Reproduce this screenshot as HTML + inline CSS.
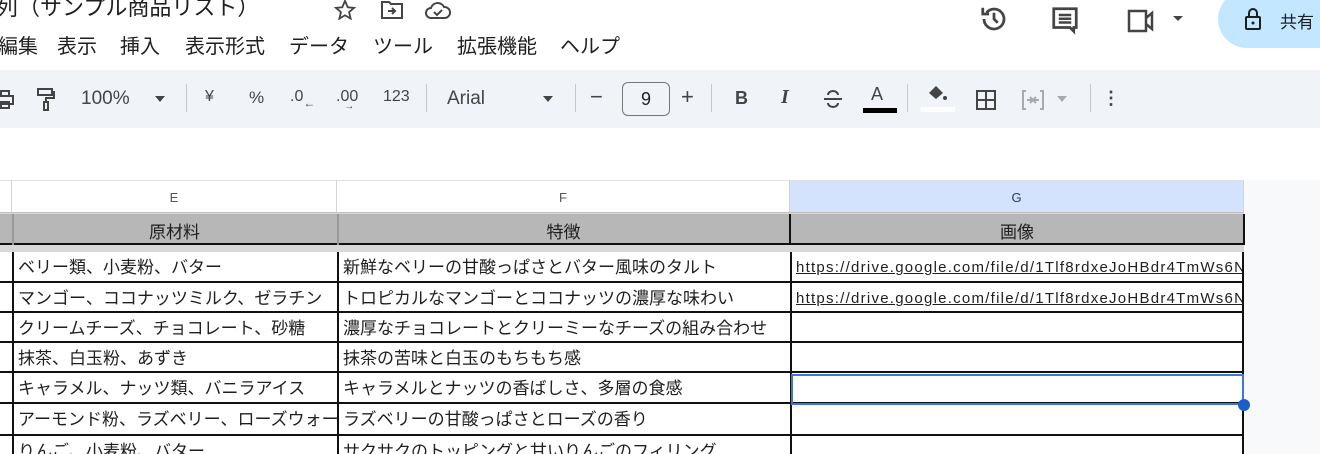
<!DOCTYPE html>
<html><head><meta charset="utf-8"><style>
*{margin:0;padding:0;box-sizing:border-box}
html,body{width:1320px;height:454px;overflow:hidden}
body{background:#fff;font-family:"Liberation Sans","Noto Sans CJK JP",sans-serif;position:relative;color:#1f1f1f}
.a{position:absolute}
.m{position:absolute;top:30px;font-size:20px;color:#1f1f1f;white-space:nowrap}
.tb{position:absolute;left:0;top:70px;width:1320px;height:58px;background:#f0f4f9}
.tb .t{position:absolute;top:18px;font-size:18px;color:#444}
.sep{position:absolute;top:14px;width:1px;height:28px;background:#c7c7c7}
.grid{position:absolute;left:0;top:180px;width:1320px;height:274px;overflow:hidden}
.hdr{position:absolute;top:0;height:33px;border-right:1px solid #d3d3d3;border-top:1px solid #e0e0e0;border-bottom:1px solid #c0c0c0;text-align:center;font-size:13px;line-height:33px;color:#555}
.row{position:absolute;left:0;width:1244px;height:30px;border-bottom:2px solid #111}
.c{position:absolute;top:0;height:100%;font-size:17px;line-height:32px;padding-left:4px;white-space:nowrap;overflow:hidden;border-left:2px solid #111}
.u{font-size:15px!important;letter-spacing:1.25px;text-decoration:underline}
</style></head><body>
<div class="a" style="left:-4px;top:-10px;font-size:22px;color:#1f1f1f">列（サンプル商品リスト）</div>
<svg class="a" style="left:334px;top:0" width="22" height="20" viewBox="0 0 24 22"><path d="M12 1l3 7 7 .6-5.5 4.7 1.7 7.2L12 16.8 5.8 20.5l1.7-7.2L2 8.6 9 8z" fill="none" stroke="#444" stroke-width="2"/></svg>
<svg class="a" style="left:380px;top:0" width="24" height="20" viewBox="0 0 24 20"><path d="M2 2h7l2 2h11v14H2z" fill="none" stroke="#444" stroke-width="2"/><path d="M8 11h7m-3-3l3 3-3 3" stroke="#444" stroke-width="2" fill="none"/></svg>
<svg class="a" style="left:424px;top:0" width="28" height="20" viewBox="0 0 28 20"><path d="M7 18a5 5 0 010-10 7 7 0 0113-1 5 5 0 011 11z" fill="none" stroke="#444" stroke-width="2"/><path d="M10 12l3 3 5-5" stroke="#444" stroke-width="2" fill="none"/></svg>
<div class="m" style="left:-2px">編集</div><div class="m" style="left:57px">表示</div><div class="m" style="left:120px">挿入</div><div class="m" style="left:185px">表示形式</div><div class="m" style="left:289px">データ</div><div class="m" style="left:373px">ツール</div><div class="m" style="left:457px">拡張機能</div><div class="m" style="left:560px">ヘルプ</div>
<svg class="a" style="left:979px;top:4px" width="30" height="30" viewBox="0 0 24 24"><path d="M4 12a8 8 0 108-8 8 8 0 00-6 3" fill="none" stroke="#444" stroke-width="2.2"/><path d="M3 3v5h5" fill="none" stroke="#444" stroke-width="2.2"/><path d="M12 7v5l3 3" fill="none" stroke="#444" stroke-width="2.2"/></svg>
<svg class="a" style="left:1050px;top:5px" width="30" height="30" viewBox="0 0 24 24"><path d="M3 3h18v15h-2v3l-3-3H3z" fill="none" stroke="#444" stroke-width="2.2"/><path d="M7 8h10M7 11h10M7 14h10" stroke="#444" stroke-width="2"/></svg>
<svg class="a" style="left:1126px;top:8px" width="34" height="26" viewBox="0 0 34 26"><path d="M3 3h17v20H3zM20 10l6-5v16l-6-5" fill="none" stroke="#444" stroke-width="2.5"/></svg>
<div class="a" style="left:1173px;top:16px;border:5px solid transparent;border-top:5px solid #444"></div>
<div class="a" style="left:1218px;top:-10px;width:130px;height:58px;border-radius:29px;background:#c2e7ff"></div>
<svg class="a" style="left:1243px;top:7px" width="20" height="24" viewBox="0 0 20 24"><rect x="3" y="10" width="14" height="12" rx="1" fill="none" stroke="#1f1f1f" stroke-width="2"/><path d="M6 10V6a4 4 0 018 0v4" fill="none" stroke="#1f1f1f" stroke-width="2"/><circle cx="10" cy="16" r="1.5" fill="#1f1f1f"/></svg>
<div class="a" style="left:1280px;top:8px;font-size:17px">共有</div>

<div class="tb">
<svg class="a" style="left:-4px;top:19px" width="18" height="20" viewBox="0 0 18 20"><path d="M1 7h16v8H1zM5 2h8v5H5zM5 13h8v6H5z" fill="none" stroke="#444" stroke-width="2"/></svg>
<svg class="a" style="left:36px;top:17px" width="20" height="24" viewBox="0 0 20 24"><path d="M2 2h14v6H2zM16 5h2v6h-8v4M8 15h4v8H8z" fill="none" stroke="#444" stroke-width="2"/></svg>
<div class="t" style="left:81px;font-size:19px">100%</div>
<div class="a" style="left:155px;top:26px;border:5px solid transparent;border-top:6px solid #444"></div>
<div class="sep" style="left:186px"></div>
<div class="t" style="left:205px;font-size:16px">¥</div>
<div class="t" style="left:249px;font-size:17px">%</div>
<div class="t" style="left:290px;font-size:16px">.0<span style="font-size:12px;position:relative;top:6px">←</span></div>
<div class="t" style="left:336px;font-size:16px">.00<span style="font-size:10px;position:relative;left:-14px;top:8px">→</span></div>
<div class="t" style="left:383px;font-size:16px">123</div>
<div class="sep" style="left:426px"></div>
<div class="t" style="left:447px;font-size:19px">Arial</div>
<div class="a" style="left:543px;top:26px;border:5px solid transparent;border-top:6px solid #444"></div>
<div class="sep" style="left:575px"></div>
<div class="t" style="left:590px;font-size:22px;top:14px">−</div>
<div class="a" style="left:622px;top:12px;width:48px;height:34px;border:1px solid #747775;border-radius:6px;text-align:center;font-size:18px;line-height:32px">9</div>
<div class="t" style="left:681px;font-size:22px;top:14px">+</div>
<div class="sep" style="left:711px"></div>
<div class="t" style="left:735px;font-weight:bold">B</div>
<div class="t" style="left:781px;font-style:italic;font-family:'Liberation Serif',serif;font-weight:bold;font-size:20px;top:16px">I</div>
<svg class="a" style="left:822px;top:18px" width="22" height="22" viewBox="0 0 22 22"><path d="M2 11h18" stroke="#444" stroke-width="2"/><path d="M6 7a5 4 0 0110 0M6 15a5 4 0 0010 0" fill="none" stroke="#444" stroke-width="2"/></svg>
<div class="t" style="left:871px;top:14px">A</div>
<div class="a" style="left:863px;top:38px;width:34px;height:5px;background:#000"></div>
<div class="sep" style="left:907px"></div>
<svg class="a" style="left:925px;top:12px" width="24" height="22" viewBox="0 0 24 22"><path d="M4 11l7-7 7 7-7 6z" fill="#444"/><circle cx="20" cy="16" r="2" fill="#444"/></svg>
<div class="a" style="left:921px;top:37px;width:34px;height:5px;background:#fff"></div>
<svg class="a" style="left:975px;top:19px" width="22" height="22" viewBox="0 0 22 22"><path d="M2 2h18v18H2zM11 2v18M2 11h18" fill="none" stroke="#444" stroke-width="2"/></svg>
<svg class="a" style="left:1021px;top:19px" width="24" height="22" viewBox="0 0 24 22"><path d="M5 2H2v18h3M19 2h3v18h-3M6 11h5m-2-3l3 3-3 3M18 11h-5m2-3l-3 3 3 3" fill="none" stroke="#aaa" stroke-width="2"/></svg>
<div class="a" style="left:1057px;top:26px;border:5px solid transparent;border-top:6px solid #aaa"></div>
<div class="sep" style="left:1090px"></div>
<div class="t" style="left:1102px;font-weight:bold">⋮</div>
</div>

<div class="grid">
<div class="a" style="left:1244px;top:0;width:76px;height:274px;background:#f8f9fa"></div>
<div class="hdr" style="left:0;width:12px"></div>
<div class="hdr" style="left:12px;width:325px">E</div>
<div class="hdr" style="left:337px;width:453px">F</div>
<div class="hdr" style="left:790px;width:454px;background:#d3e3fd;color:#1f3a7a">G</div>
<div class="a" style="left:0;top:33px;width:1244px;height:39px;background:#d8d8d8"></div>
<div class="a" style="left:0;top:34px;width:1244px;height:31px;background:#b7b7b7;border-bottom:2px solid #111"></div>
<div class="a" style="left:12px;top:34px;width:2px;height:31px;background:#999"></div>
<div class="a" style="left:337px;top:34px;width:2px;height:31px;background:#999"></div>
<div class="a" style="left:789px;top:34px;width:2px;height:31px;background:#111"></div>
<div class="a" style="left:1243px;top:34px;width:2px;height:31px;background:#111"></div>
<div class="a" style="left:12px;top:38px;width:325px;text-align:center;font-size:17px">原材料</div>
<div class="a" style="left:337px;top:38px;width:453px;text-align:center;font-size:17px">特徴</div>
<div class="a" style="left:790px;top:38px;width:454px;text-align:center;font-size:17px">画像</div>

<div class="row" style="top:72px;height:31px"><div class="c" style="left:12px;width:325px">ベリー類、小麦粉、バター</div><div class="c" style="left:337px;width:453px">新鮮なベリーの甘酸っぱさとバター風味のタルト</div><div class="c u" style="left:790px;width:454px;border-right:2px solid #111">https://drive.google.com/file/d/1Tlf8rdxeJoHBdr4TmWs6N</div></div>
<div class="row" style="top:103px"><div class="c" style="left:12px;width:325px">マンゴー、ココナッツミルク、ゼラチン</div><div class="c" style="left:337px;width:453px">トロピカルなマンゴーとココナッツの濃厚な味わい</div><div class="c u" style="left:790px;width:454px;border-right:2px solid #111">https://drive.google.com/file/d/1Tlf8rdxeJoHBdr4TmWs6N</div></div>
<div class="row" style="top:133px"><div class="c" style="left:12px;width:325px">クリームチーズ、チョコレート、砂糖</div><div class="c" style="left:337px;width:453px">濃厚なチョコレートとクリーミーなチーズの組み合わせ</div><div class="c" style="left:790px;width:454px;border-right:2px solid #111"></div></div>
<div class="row" style="top:163px"><div class="c" style="left:12px;width:325px">抹茶、白玉粉、あずき</div><div class="c" style="left:337px;width:453px">抹茶の苦味と白玉のもちもち感</div><div class="c" style="left:790px;width:454px;border-right:2px solid #111"></div></div>
<div class="row" style="top:193px;height:31px"><div class="c" style="left:12px;width:325px">キャラメル、ナッツ類、バニラアイス</div><div class="c" style="left:337px;width:453px">キャラメルとナッツの香ばしさ、多層の食感</div><div class="c" style="left:790px;width:454px;border-right:2px solid #111"></div></div>
<div class="row" style="top:224px;height:32px"><div class="c" style="left:12px;width:325px">アーモンド粉、ラズベリー、ローズウォーター</div><div class="c" style="left:337px;width:453px">ラズベリーの甘酸っぱさとローズの香り</div><div class="c" style="left:790px;width:454px;border-right:2px solid #111"></div></div>
<div class="row" style="top:256px;height:30px"><div class="c" style="left:12px;width:325px">りんご、小麦粉、バター</div><div class="c" style="left:337px;width:453px">サクサクのトッピングと甘いりんごのフィリング</div><div class="c" style="left:790px;width:454px;border-right:2px solid #111"></div></div>
<div class="a" style="left:791px;top:194px;width:453px;height:31px;border:2px solid #3b78d0"></div>
<div class="a" style="left:1238px;top:219px;width:12px;height:12px;border-radius:50%;background:#1a5fc7"></div>
</div>
</body></html>
